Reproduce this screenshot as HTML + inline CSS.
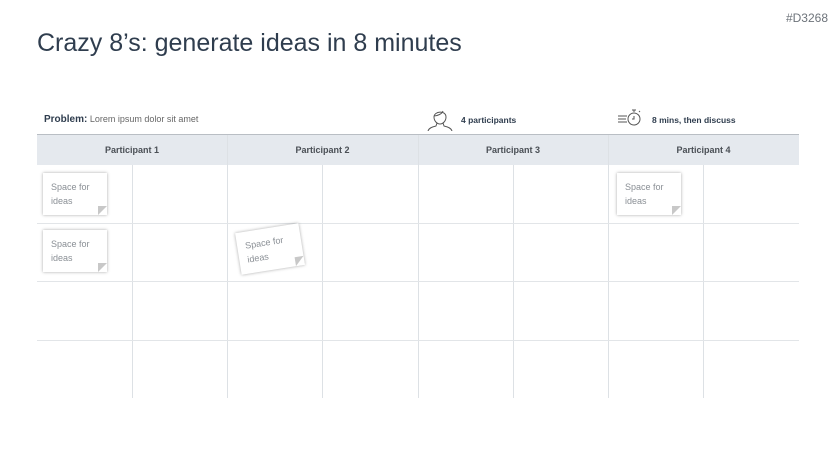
<!DOCTYPE html>
<html><head><style>
body{margin:0;width:836px;height:470px;background:#fff;font-family:"Liberation Sans",sans-serif;position:relative;overflow:hidden}
.a{position:absolute}
.vl{position:absolute;width:1px;background:#dde1e5}
.hl{position:absolute;height:1px;background:#e2e5e8;left:37px;width:762px}
.hd{position:absolute;top:135px;height:30px;line-height:30px;text-align:center;font-size:9px;font-weight:bold;color:#4a4f55}
.n{position:absolute;width:64px;height:42px;background:#fff;box-shadow:0 0 3px rgba(0,0,0,.35);font-size:9px;color:#8a8f95;line-height:14px;padding:7px 0 0 8px;box-sizing:border-box}
.n:after{content:"";position:absolute;right:0;bottom:0;border-style:solid;border-width:0 0 9px 9px;border-color:transparent transparent #fff #c8c8c8;}
</style></head><body>
<div class="a" style="right:8px;top:11px;font-size:12px;color:#6d737a">#D3268</div>
<div class="a" style="left:37px;top:29px;font-size:25px;color:#2f3d4e">Crazy 8’s: generate ideas in 8 minutes</div>
<div class="a" style="left:44px;top:114px;font-size:9px;color:#666"><b style="color:#2f3d4e;font-size:10px">Problem:</b> Lorem ipsum dolor sit amet</div>
<svg class="a" style="left:426px;top:107px" width="28" height="24" viewBox="0 0 28 24" fill="none" stroke="#555" stroke-width="1"><path d="M8 10c0-6 12-7 12 0c0 4-3 7-6 7s-6-3-6-7z"/><path d="M8 9c3 0 8-2 9-5"/><path d="M11 16l-1 3c-4 1-7 2-8 5M17 16l1 3c4 1 7 2 8 5"/></svg>
<div class="a" style="left:461px;top:115px;font-size:8.5px;font-weight:bold;color:#2f3d4e">4 participants</div>
<svg class="a" style="left:616px;top:107px" width="28" height="22" viewBox="0 0 28 22" fill="none" stroke="#555" stroke-width="1"><circle cx="18" cy="12" r="6"/><path d="M18 5V3M16 3h4M18 9v3h-2M2 9h9M2 12h8M2 15h9M23 5l1-1"/></svg>
<div class="a" style="left:652px;top:115px;font-size:8.5px;font-weight:bold;color:#2f3d4e">8 mins, then discuss</div>
<div class="a" style="left:37px;top:134px;width:762px;height:31px;background:#e5e9ee;border-top:1px solid #b9bec4;box-sizing:border-box"></div>
<div class="hd" style="left:37px;width:190px">Participant 1</div>
<div class="hd" style="left:227px;width:191px">Participant 2</div>
<div class="hd" style="left:418px;width:190px">Participant 3</div>
<div class="hd" style="left:608px;width:191px">Participant 4</div>
<div class="vl" style="left:227px;top:135px;height:263px"></div>
<div class="vl" style="left:418px;top:135px;height:263px"></div>
<div class="vl" style="left:608px;top:135px;height:263px"></div>
<div class="vl" style="left:132px;top:165px;height:233px"></div>
<div class="vl" style="left:322px;top:165px;height:233px"></div>
<div class="vl" style="left:513px;top:165px;height:233px"></div>
<div class="vl" style="left:703px;top:165px;height:233px"></div>
<div class="hl" style="top:223px"></div>
<div class="hl" style="top:281px"></div>
<div class="hl" style="top:340px"></div>
<div class="n" style="left:43px;top:173px">Space for<br>ideas</div>
<div class="n" style="left:43px;top:230px">Space for<br>ideas</div>
<div class="n" style="left:617px;top:173px">Space for<br>ideas</div>
<div class="n" style="left:238px;top:228px;transform:rotate(-9deg)">Space for<br>ideas</div>
</body></html>
